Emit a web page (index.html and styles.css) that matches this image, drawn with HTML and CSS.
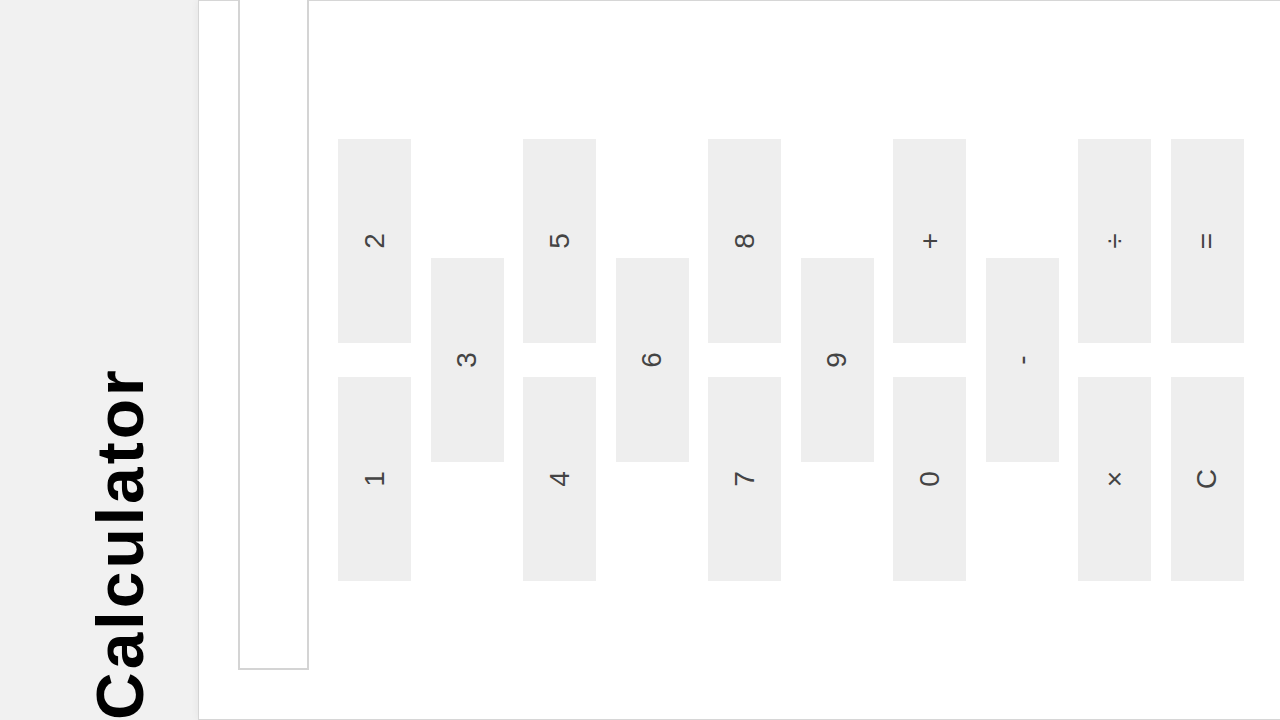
FILE: index.html
```html
<!DOCTYPE html>
<html lang="en">
<head>
    <meta charset="UTF-8">
    <meta name="viewport" content="width=device-width, initial-scale=1.0">
    <title>Calculator</title>
    <link rel="stylesheet" href="styles.css">
</head>

<body>
    <div class="page">
        <header>
            <h1>Calculator</h1>
        </header>
        <main class="calc">
            <input class="display" type="text" readonly>
            <div class="keys">
                <div class="row"><button class="key">1</button><button class="key">2</button></div>
                <div class="row"><button class="key">3</button></div>
                <div class="row"><button class="key">4</button><button class="key">5</button></div>
                <div class="row"><button class="key">6</button></div>
                <div class="row"><button class="key">7</button><button class="key">8</button></div>
                <div class="row"><button class="key">9</button></div>
                <div class="row"><button class="key">0</button><button class="key">+</button></div>
                <div class="row"><button class="key">-</button></div>
                <div class="row"><button class="key">×</button><button class="key">÷</button></div>
                <div class="row"><button class="key">C</button><button class="key">=</button></div>
            </div>
        </main>
    </div>

    <script>
        const display = document.querySelector('.display')
        document.querySelectorAll('.key').forEach((key) => {
            key.onclick = function () {
                const k = this.innerText
                if (k == 'C') {
                    display.value = ''
                } else if (k == '=') {
                    try {
                        display.value = eval(display.value.replace(/×/g, '*').replace(/÷/g, '/'))
                    } catch (e) {
                        display.value = 'Error'
                    }
                } else {
                    display.value += k
                }
            }
        })
    </script>
</body>

</html>
```

FILE: styles.css
```css
* {
    padding: 0;
    margin: 0;
    box-sizing: border-box;
}
body {
    height: 720px;
    overflow: hidden;
    background-color: #f1f1f1;
    font-family: "Liberation Sans", Arial, sans-serif;
}
/* portrait page turned on its side */
.page {
    width: 720px;
    height: 1280px;
    transform-origin: top left;
    transform: translateY(720px) rotate(-90deg);
}
header {
    height: 198px;
    padding-top: 84px;
}
h1 {
    font-size: 66px;
    line-height: 72px;
    font-weight: 700;
    letter-spacing: 3px;
    color: #000;
    white-space: nowrap;
}
.calc {
    height: 1200px;
    padding-top: 39px;
    background-color: #fff;
    border: 1px solid #d6d6d6;
    box-shadow: 0 0 8px rgba(0, 0, 0, 0.06);
}
.display {
    display: block;
    width: 700px;
    height: 71px;
    margin-left: 49px;
    border: 2px solid #d4d4d4;
    background-color: #fff;
    outline: none;
    font-size: 30px;
    padding: 0 15px;
}
.keys {
    display: flex;
    flex-direction: column;
    gap: 19.5px;
    margin-top: 29px;
}
.row {
    display: flex;
    justify-content: center;
    gap: 34px;
}
.key {
    width: 204px;
    height: 73px;
    border: none;
    background-color: #eee;
    color: #444;
    font-family: "Liberation Sans", Arial, sans-serif;
    font-size: 28px;
    cursor: pointer;
}
.key:active {
    background-color: #ddd;
}
```
